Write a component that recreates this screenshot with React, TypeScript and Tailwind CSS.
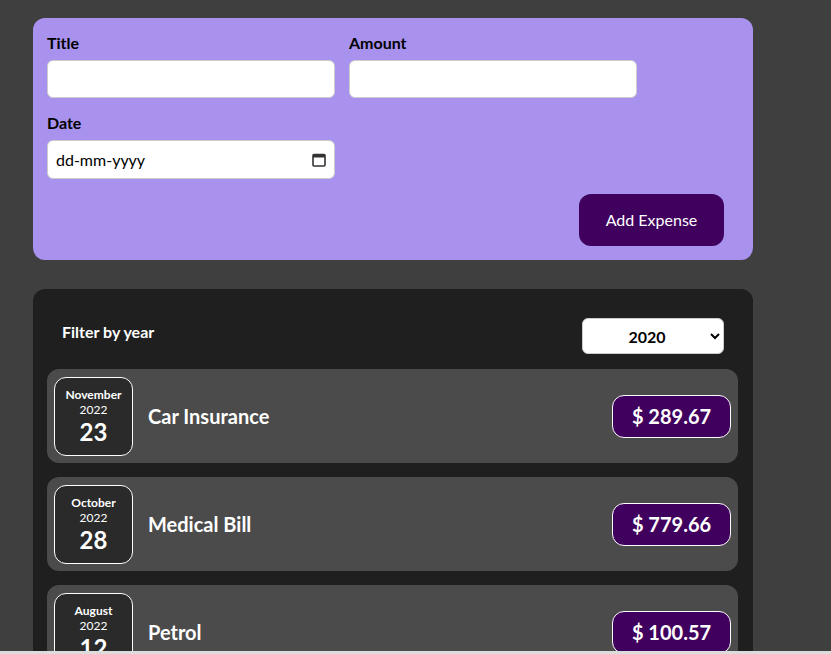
import { useState } from "react";

type Expense = {
  id: string;
  title: string;
  amount: number;
  month: string;
  year: string;
  day: string;
};

const expenses: Expense[] = [
  { id: "e1", title: "Car Insurance", amount: 289.67, month: "November", year: "2022", day: "23" },
  { id: "e2", title: "Medical Bill", amount: 779.66, month: "October", year: "2022", day: "28" },
  { id: "e3", title: "Petrol", amount: 100.57, month: "August", year: "2022", day: "12" },
];

const font = { fontFamily: "Lato, 'Noto Sans', sans-serif" };

function ExpenseItem({ item }: { item: Expense }) {
  return (
    <div className="flex h-[94px] items-center rounded-xl bg-[#4b4b4b] p-[7px]">
      <div className="flex h-[79px] w-[79px] shrink-0 flex-col items-center justify-center rounded-xl border border-white bg-[#2a2a2a] text-white">
        <span className="text-[12px] font-bold leading-[15px]">{item.month}</span>
        <span className="text-[12px] leading-[16px]">{item.year}</span>
        <span className="text-[24px] font-bold leading-[28px]">{item.day}</span>
      </div>
      <h2 className="ml-[15px] flex-1 text-[20px] font-bold text-white">{item.title}</h2>
      <div className="flex h-[43px] w-[119px] items-center justify-center rounded-xl border border-white bg-[#40005d] text-[20px] font-bold text-white">
        $ {item.amount}
      </div>
    </div>
  );
}

export default function App() {
  const [year, setYear] = useState("2020");

  return (
    <div className="min-h-screen bg-[#3f3f3f] pt-[18px]" style={font}>
      <div className="ml-[33px] w-[720px] rounded-xl bg-[#a892ee] px-[14px] pt-[15px] pb-[14px]">
        <div className="grid grid-cols-[288px_288px] gap-x-[14px] gap-y-[15px]">
          <div>
            <label className="mb-[7px] block text-base font-bold leading-5 text-black">Title</label>
            <input type="text" className="h-[38px] w-full rounded-md border border-[#ccc] bg-white px-2" />
          </div>
          <div>
            <label className="mb-[7px] block text-base font-bold leading-5 text-black">Amount</label>
            <input type="number" className="h-[38px] w-full rounded-md border border-[#ccc] bg-white px-2" />
          </div>
          <div>
            <label className="mb-[7px] block text-base font-bold leading-5 text-black">Date</label>
            <div className="relative">
              <input
                type="text"
                placeholder="dd-mm-yyyy"
                className="h-[39px] w-full rounded-md border border-[#ccc] bg-white px-2 text-base text-black placeholder:text-black"
              />
              <svg
                className="pointer-events-none absolute top-1/2 right-[9px] -translate-y-1/2"
                width="14"
                height="14"
                viewBox="0 0 14 14"
              >
                <rect x="1" y="1.5" width="12" height="11.5" rx="1" fill="none" stroke="#333" strokeWidth="1.6" />
                <rect x="1" y="1.5" width="12" height="3" fill="#333" />
              </svg>
            </div>
          </div>
        </div>
        <div className="mt-[15px] flex justify-end pr-[15px]">
          <button className="h-[52px] w-[145px] rounded-xl bg-[#40005d] text-base text-white">Add Expense</button>
        </div>
      </div>

      <div className="mt-[29px] ml-[33px] w-[720px] rounded-xl bg-[#1f1f1f] pt-[14px] pr-[15px] pb-4 pl-[14px]">
        <div className="my-[15px] flex items-center justify-between pr-[14px] pl-[15px] text-white">
          <label className="pb-2 text-base font-bold">Filter by year</label>
          <select
            value={year}
            onChange={(e) => setYear(e.target.value)}
            className="h-[36px] w-[142px] rounded-md border border-[#ccc] bg-white px-3 text-center text-base font-bold text-black"
          >
            <option value="2022">2022</option>
            <option value="2021">2021</option>
            <option value="2020">2020</option>
            <option value="2019">2019</option>
          </select>
        </div>
        <div className="flex flex-col gap-[14px]">
          {expenses.map((item) => (
            <ExpenseItem key={item.id} item={item} />
          ))}
        </div>
      </div>
      <div className="fixed bottom-0 left-0 h-[3px] w-full bg-[#dcdcdc]" />
    </div>
  );
}
